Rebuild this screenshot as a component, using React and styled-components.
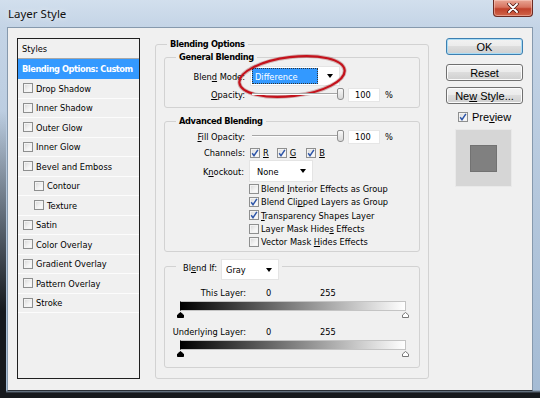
import React from 'react';
import styled, { createGlobalStyle } from 'styled-components';

const UI = '"DejaVu Sans Condensed", "Liberation Sans", sans-serif';
const BTN = '"Liberation Sans", Arial, sans-serif';

const GlobalStyle = createGlobalStyle`
  html, body { margin: 0; padding: 0; }
  body {
    width: 540px;
    height: 398px;
    overflow: hidden;
    background: #1a1d21;
    font-family: ${UI};
    font-size: 9.2px;
    color: #000;
  }
`;

const Frame = styled.div`
  width: 540px;
  height: 398px;
  box-sizing: border-box;
  display: flex;
  flex-direction: column;
  padding: 0 7px 7px 7px;
  background:
    linear-gradient(to bottom, rgba(18, 20, 24, 0), #16191d 70%) left bottom / 6px 72% no-repeat,
    linear-gradient(to bottom, rgba(18, 20, 24, 0), #16191d 40%) left bottom / 100% 8px no-repeat,
    linear-gradient(to bottom, #d2dfed 0, #c4d4e6 27px, #b4c7dc 50%, #a4bbd4 100%);
`;

const TitleBar = styled.div`
  height: 27px;
  display: flex;
  justify-content: space-between;
  align-items: flex-start;
`;

const Title = styled.div`
  font-family: "Noto Sans", "Open Sans", sans-serif;
  font-size: 11.5px;
  line-height: 28px;
  padding-left: 1px;
  color: #111;
  text-shadow: 0 0 6px rgba(255, 255, 255, 0.9);
`;

const CloseButton = styled.div`
  width: 40px;
  height: 17px;
  box-sizing: border-box;
  border: 1px solid #6b2a22;
  border-top: none;
  border-radius: 0 0 4px 4px;
  background: linear-gradient(to bottom, #e9a594 0%, #d7735f 45%, #c0412b 55%, #d0654a 100%);
  box-shadow: inset 0 0 0 1px rgba(255, 220, 210, 0.45);
  display: flex;
  align-items: center;
  justify-content: center;
`;

const Client = styled.div`
  flex: 1;
  display: flex;
  align-items: flex-start;
  background: #f0f0f0;
  border: 1px solid #8699ad;
  border-bottom-color: #2a2f36;
  padding: 10px 9px 0 9px;
`;

/* ---------- styles list ---------- */

const StylesList = styled.div`
  width: 123px;
  height: 341px;
  box-sizing: border-box;
  border: 1px solid #1f1f1f;
  background: #f0f0f0;
  flex-shrink: 0;
`;

const ListHeader = styled.div`
  height: 20px;
  box-sizing: border-box;
  border-bottom: 1px solid #a7a7a7;
  padding-left: 4px;
  display: flex;
  align-items: center;
`;

const ListItem = styled.div`
  height: 19.5px;
  box-sizing: border-box;
  display: flex;
  align-items: center;
  gap: 3px;
  padding-left: ${p => (p.$indent ? 16 : 5)}px;
  border-bottom: 1px solid #fcfcfc;
  ${p => p.$selected && `
    height: 20px;
    padding-left: 4px;
    background: #3399ff;
    color: #fff;
    font-weight: bold;
    letter-spacing: -0.45px;
    border-bottom-color: #3399ff;
  `}
`;

/* ---------- checkbox ---------- */

const Box = styled.span`
  width: 10px;
  height: 10px;
  box-sizing: border-box;
  flex-shrink: 0;
  border: 1px solid #8e8f8f;
  background: linear-gradient(135deg, #d6d6d6 0%, #f4f4f4 60%, #fdfdfd 100%);
  box-shadow: inset 0 0 0 1px #f3f3f3;
  display: inline-flex;
  align-items: center;
  justify-content: center;
`;

const Check = ({ on }) => (
  <Box>
    {on && (
      <svg width="8" height="8" viewBox="0 0 8 8">
        <path d="M1.2 4.2 L3 6.6 L6.9 0.9" fill="none" stroke="#2d55a8" strokeWidth="1.5" />
      </svg>
    )}
  </Box>
);

/* ---------- group boxes ---------- */

const Group = styled.fieldset`
  margin: ${p => (p.$outer ? '0' : `${p.$top || 0}px 8px 0 8px`)};
  padding: ${p => p.$pad || '0'};
  border: 1px solid #d2d2d2;
  border-radius: 3px;
  min-width: 0;
  box-sizing: border-box;
  ${p => p.$outer && `
    width: 274px;
    height: 341px;
    margin-left: 15px;
    flex-shrink: 0;
  `}
`;

const Legend = styled.legend`
  margin-left: 11px;
  padding: 0 3px;
  font-weight: bold;
  line-height: 12px;
  letter-spacing: -0.35px;
`;

const BlendIfLegend = styled.legend`
  margin-left: 11px;
  padding: 0 3px 0 7px;
  height: 14px;
  display: flex;
  align-items: flex-start;
  gap: 4px;
`;

const LegendLabel = styled.span`
  margin-top: 3px;
`;

const Row = styled.div`
  position: relative;
  display: flex;
  align-items: center;
  height: ${p => p.$h || 15}px;
  margin-top: ${p => p.$mt || 0}px;
`;

const Label = styled.span`
  width: ${p => p.$w || 80}px;
  margin-right: 5px;
  text-align: right;
  flex-shrink: 0;
  white-space: nowrap;
`;

const Select = styled.div`
  width: ${p => p.$w}px;
  height: ${p => p.$h}px;
  box-sizing: border-box;
  border: 1px solid #e4e4e4;
  background: #fff;
  display: flex;
  align-items: center;
  justify-content: space-between;
  padding: 0 6px 0 ${p => p.$pl || 6}px;
`;

const Arrow = styled.span`
  width: 0;
  height: 0;
  border-left: 3.5px solid transparent;
  border-right: 3.5px solid transparent;
  border-top: 4px solid #000;
`;

const Highlight = styled.span`
  width: 66px;
  height: 16px;
  box-sizing: border-box;
  background: #3399ff;
  color: #fff;
  border: 1px dotted #333;
  display: flex;
  align-items: center;
  padding-left: 2px;
`;

const Slider = styled.div`
  position: relative;
  width: 94px;
  height: 15px;
  &::before {
    content: '';
    position: absolute;
    left: 2px;
    right: 5px;
    top: 6px;
    border-top: 1px solid #a6a6a6;
    border-bottom: 1px solid #fdfdfd;
  }
`;

const Thumb = styled.span`
  position: absolute;
  right: 0;
  top: 1px;
  width: 7px;
  height: 12px;
  box-sizing: border-box;
  border: 1px solid #8f8f8f;
  border-radius: 2px 2px 3px 3px;
  background: linear-gradient(to bottom, #f8f8f8, #d8d8d8);
`;

const NumBox = styled.span`
  width: 32px;
  height: 14px;
  box-sizing: border-box;
  margin-left: 4px;
  border: 1px solid #e6e6e6;
  background: #fff;
  padding-left: 6px;
  display: flex;
  align-items: center;
`;

const Percent = styled.span`
  margin-left: 5px;
`;

const Channel = styled.span`
  display: inline-flex;
  align-items: center;
  gap: 3px;
  margin-right: ${p => p.$mr || 0}px;
`;

const OptionList = styled.div`
  padding-left: 84px;
`;

const Option = styled.div`
  height: 13.3px;
  display: flex;
  align-items: center;
  gap: 2px;
`;

const ValueRow = styled.div`
  display: flex;
  align-items: center;
  height: 12px;
  margin-top: ${p => p.$mt || 0}px;
`;

const Value = styled.span`
  width: ${p => p.$w}px;
  margin-left: ${p => p.$ml || 0}px;
  flex-shrink: 0;
`;

const GradientBar = styled.div`
  width: 226px;
  height: 10px;
  box-sizing: border-box;
  margin: 3px 0 0 15px;
  border: 1px solid #c4c4c4;
  border-left-color: #000;
  background: linear-gradient(to right, #000 0%, #fff 100%);
`;

const Markers = styled.div`
  width: 232px;
  height: 6px;
  margin: 1px 0 0 12px;
  display: flex;
  justify-content: space-between;
`;

const Ellipse = styled.svg`
  position: absolute;
  left: 71px;
  top: -13px;
  pointer-events: none;
  overflow: visible;
`;

/* ---------- right column ---------- */

const Side = styled.div`
  width: 77px;
  margin-left: 17px;
  display: flex;
  flex-direction: column;
  flex-shrink: 0;
`;

const Button = styled.div`
  height: 17px;
  box-sizing: border-box;
  margin-top: ${p => p.$mt || 0}px;
  border: 1px solid ${p => (p.$default ? '#3c7fb1' : '#707070')};
  border-radius: 3px;
  background: linear-gradient(to bottom, #f2f2f2 0%, #ebebeb 49%, #dddddd 50%, #cfcfcf 100%);
  box-shadow: inset 0 0 0 1px ${p => (p.$default ? '#a9dcf5' : '#fbfbfb')};
  font-family: ${BTN};
  font-size: 11px;
  display: flex;
  align-items: center;
  justify-content: center;
`;

const PreviewToggle = styled.div`
  margin: 7px 0 0 12px;
  height: 12px;
  display: flex;
  align-items: center;
  gap: 4px;
  font-family: ${BTN};
  font-size: 11px;
`;

const Swatch = styled.div`
  width: 57px;
  height: 58px;
  box-sizing: border-box;
  margin: 6px 0 0 9px;
  border: 1px solid #e9e9e9;
  background: #d6d6d6;
  display: flex;
  align-items: center;
  justify-content: center;
`;

const SwatchInner = styled.div`
  width: 27px;
  height: 27px;
  box-sizing: border-box;
  border: 1px solid #727272;
  background: #808080;
`;

const Marker = ({ light }) => (
  <svg width="7" height="6" viewBox="0 0 7 6">
    <path
      d="M3.5 0.5 L6.5 3 L6.5 5.5 L0.5 5.5 L0.5 3 Z"
      fill={light ? '#fff' : '#000'}
      stroke={light ? '#777' : '#000'}
      strokeWidth="1"
    />
  </svg>
);

const styles = [
  { name: 'Drop Shadow' },
  { name: 'Inner Shadow' },
  { name: 'Outer Glow' },
  { name: 'Inner Glow' },
  { name: 'Bevel and Emboss' },
  { name: 'Contour', indent: true },
  { name: 'Texture', indent: true },
  { name: 'Satin' },
  { name: 'Color Overlay' },
  { name: 'Gradient Overlay' },
  { name: 'Pattern Overlay' },
  { name: 'Stroke' },
];

const options = [
  { on: false, label: <>Blend <u>I</u>nterior Effects as Group</> },
  { on: true, label: <>Blend Cli<u>p</u>ped Layers as Group</> },
  { on: true, label: <><u>T</u>ransparency Shapes Layer</> },
  { on: false, label: <>Layer Mask Hide<u>s</u> Effects</> },
  { on: false, label: <>Vector Mask <u>H</u>ides Effects</> },
];

function OpacityControl() {
  return (
    <>
      <Slider>
        <Thumb />
      </Slider>
      <NumBox>100</NumBox>
      <Percent>%</Percent>
    </>
  );
}

function LevelRow({ label, mt }) {
  return (
    <>
      <ValueRow $mt={mt}>
        <Label $w={81}>{label}</Label>
        <Value $w={54} $ml={15}>0</Value>
        <Value $w={30}>255</Value>
      </ValueRow>
      <GradientBar />
      <Markers>
        <Marker />
        <Marker light />
      </Markers>
    </>
  );
}

export default function App() {
  return (
    <>
      <GlobalStyle />
      <Frame>
        <TitleBar>
          <Title>Layer Style</Title>
          <CloseButton>
            <svg width="12" height="10" viewBox="0 0 12 10">
              <path
                d="M2 1 L10 9 M10 1 L2 9"
                stroke="#4a1510"
                strokeWidth="3.4"
                strokeLinecap="round"
              />
              <path
                d="M2 1 L10 9 M10 1 L2 9"
                stroke="#fff"
                strokeWidth="1.9"
                strokeLinecap="round"
              />
            </svg>
          </CloseButton>
        </TitleBar>

        <Client>
          <StylesList>
            <ListHeader>Styles</ListHeader>
            <ListItem $selected>Blending Options: Custom</ListItem>
            {styles.map(s => (
              <ListItem key={s.name} $indent={s.indent}>
                <Check />
                <span>{s.name}</span>
              </ListItem>
            ))}
          </StylesList>

          <Group $outer>
            <Legend>Blending Options</Legend>

            <Group $pad="3px 0 5px 0" $top={1}>
              <Legend>General Blending</Legend>
              <Row $h={20}>
                <Label>Blen<u>d</u> Mode:</Label>
                <Select $w={90} $h={20} $pl={1}>
                  <Highlight>Difference</Highlight>
                  <Arrow />
                </Select>
                <Ellipse width="112" height="46" viewBox="0 0 112 46">
                  <ellipse
                    cx="56"
                    cy="23.5"
                    rx="53"
                    ry="19.5"
                    transform="rotate(-7 56 23.5)"
                    fill="none"
                    stroke="rgba(120,0,0,0.25)"
                    strokeWidth="4"
                  />
                  <ellipse
                    cx="56"
                    cy="23.5"
                    rx="53"
                    ry="19.5"
                    transform="rotate(-7 56 23.5)"
                    fill="none"
                    stroke="#c4121c"
                    strokeWidth="2.2"
                  />
                </Ellipse>
              </Row>
              <Row $mt={1}>
                <Label><u>O</u>pacity:</Label>
                <OpacityControl />
              </Row>
            </Group>

            <Group $pad="2px 0 3px 0" $top={7}>
              <Legend>Advanced Blending</Legend>
              <Row>
                <Label><u>F</u>ill Opacity:</Label>
                <OpacityControl />
              </Row>
              <Row $mt={1}>
                <Label>Channels:</Label>
                <Channel $mr={8}><Check on /><u>R</u></Channel>
                <Channel $mr={10}><Check on /><u>G</u></Channel>
                <Channel><Check on /><u>B</u></Channel>
              </Row>
              <Row $h={22}>
                <Label $w={79}>K<u>n</u>ockout:</Label>
                <Select $w={64} $h={22} $pl={7}>
                  <span>None</span>
                  <Arrow />
                </Select>
              </Row>
              <OptionList>
                {options.map((o, i) => (
                  <Option key={i}>
                    <Check on={o.on} />
                    <span>{o.label}</span>
                  </Option>
                ))}
              </OptionList>
            </Group>

            <Group $pad="13px 0 10px 0" $top={7}>
              <BlendIfLegend>
                <LegendLabel>Bl<u>e</u>nd If:</LegendLabel>
                <Select $w={58} $h={21} $pl={4}>
                  <span>Gray</span>
                  <Arrow />
                </Select>
              </BlendIfLegend>
              <LevelRow label="This Layer:" />
              <LevelRow label="Underlying Layer:" mt={7} />
            </Group>
          </Group>

          <Side>
            <Button $default>OK</Button>
            <Button $mt={9}>Reset</Button>
            <Button $mt={6}><span>Ne<u>w</u> Style...</span></Button>
            <PreviewToggle>
              <Check on />
              <span>Pre<u>v</u>iew</span>
            </PreviewToggle>
            <Swatch>
              <SwatchInner />
            </Swatch>
          </Side>
        </Client>
      </Frame>
    </>
  );
}
